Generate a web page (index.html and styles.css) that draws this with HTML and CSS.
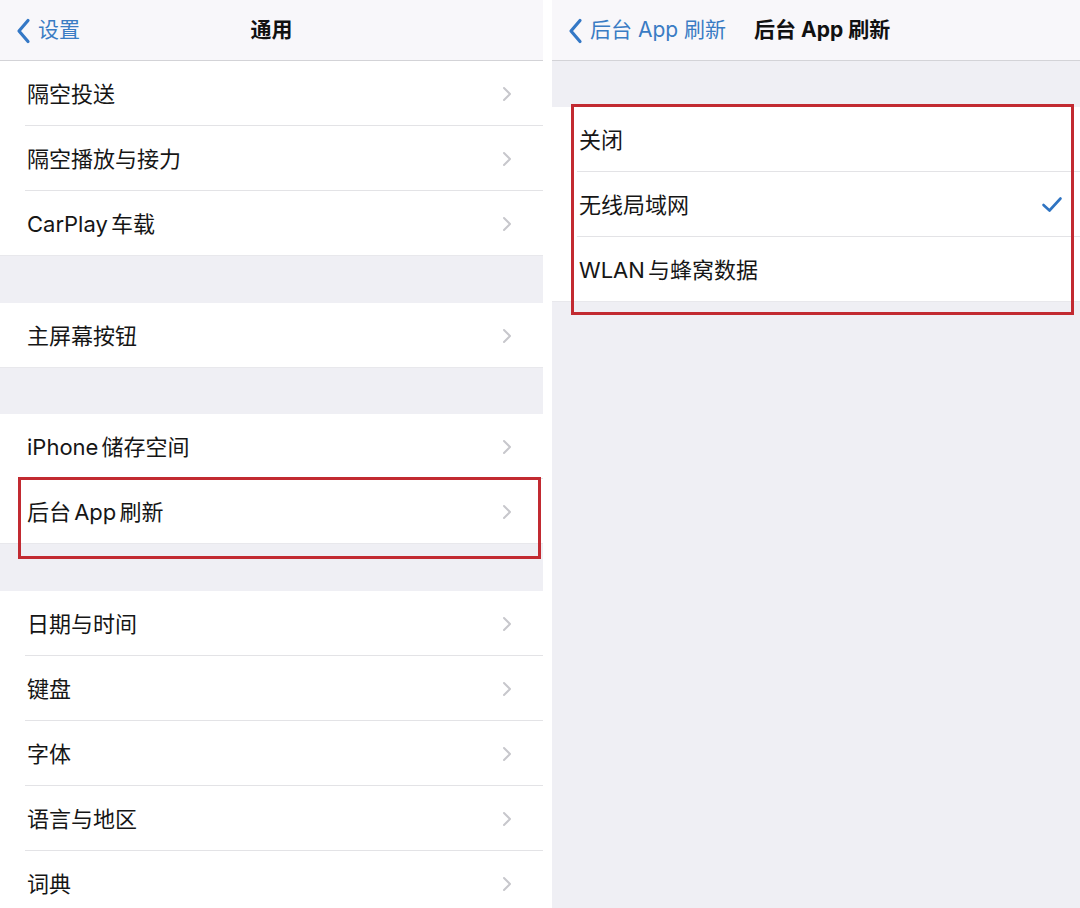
FILE: index.html
```html
<!DOCTYPE html>
<html lang="zh-CN">
<head>
<meta charset="utf-8">
<title>通用 / 后台 App 刷新</title>
<link rel="stylesheet" href="styles.css">
</head>
<body>
<div class="screen">
  <section class="panel panel-left">
    <header class="nav nav-left">
      <div class="back">
        <svg class="back-icon" width="15" height="26" viewBox="0 0 15 26"><polyline points="12,2.5 3,13 12,23.5" fill="none" stroke="#3478c6" stroke-width="3.2" stroke-linecap="round" stroke-linejoin="round"/></svg>
        <span class="back-text">设置</span>
      </div>
      <div class="nav-title">通用</div>
      <div></div>
    </header>
    <div class="list">
      <div class="group">
        <div class="row"><span class="label">隔空投送</span><svg class="chev" width="10" height="16" viewBox="0 0 10 16"><polyline points="2,2 8,8 2,14" fill="none" stroke="#c7c7cc" stroke-width="2" stroke-linecap="round" stroke-linejoin="round"/></svg></div>
        <div class="row"><span class="label">隔空播放与接力</span><svg class="chev" width="10" height="16" viewBox="0 0 10 16"><polyline points="2,2 8,8 2,14" fill="none" stroke="#c7c7cc" stroke-width="2" stroke-linecap="round" stroke-linejoin="round"/></svg></div>
        <div class="row"><span class="label">CarPlay 车载</span><svg class="chev" width="10" height="16" viewBox="0 0 10 16"><polyline points="2,2 8,8 2,14" fill="none" stroke="#c7c7cc" stroke-width="2" stroke-linecap="round" stroke-linejoin="round"/></svg></div>
      </div>
      <div class="spacer spacer-a"></div>
      <div class="group">
        <div class="row"><span class="label">主屏幕按钮</span><svg class="chev" width="10" height="16" viewBox="0 0 10 16"><polyline points="2,2 8,8 2,14" fill="none" stroke="#c7c7cc" stroke-width="2" stroke-linecap="round" stroke-linejoin="round"/></svg></div>
      </div>
      <div class="spacer spacer-b"></div>
      <div class="group">
        <div class="row"><span class="label">iPhone 储存空间</span><svg class="chev" width="10" height="16" viewBox="0 0 10 16"><polyline points="2,2 8,8 2,14" fill="none" stroke="#c7c7cc" stroke-width="2" stroke-linecap="round" stroke-linejoin="round"/></svg></div>
        <div class="row"><span class="label">后台 App 刷新</span><svg class="chev" width="10" height="16" viewBox="0 0 10 16"><polyline points="2,2 8,8 2,14" fill="none" stroke="#c7c7cc" stroke-width="2" stroke-linecap="round" stroke-linejoin="round"/></svg></div>
      </div>
      <div class="spacer spacer-c"></div>
      <div class="group">
        <div class="row"><span class="label">日期与时间</span><svg class="chev" width="10" height="16" viewBox="0 0 10 16"><polyline points="2,2 8,8 2,14" fill="none" stroke="#c7c7cc" stroke-width="2" stroke-linecap="round" stroke-linejoin="round"/></svg></div>
        <div class="row"><span class="label">键盘</span><svg class="chev" width="10" height="16" viewBox="0 0 10 16"><polyline points="2,2 8,8 2,14" fill="none" stroke="#c7c7cc" stroke-width="2" stroke-linecap="round" stroke-linejoin="round"/></svg></div>
        <div class="row"><span class="label">字体</span><svg class="chev" width="10" height="16" viewBox="0 0 10 16"><polyline points="2,2 8,8 2,14" fill="none" stroke="#c7c7cc" stroke-width="2" stroke-linecap="round" stroke-linejoin="round"/></svg></div>
        <div class="row"><span class="label">语言与地区</span><svg class="chev" width="10" height="16" viewBox="0 0 10 16"><polyline points="2,2 8,8 2,14" fill="none" stroke="#c7c7cc" stroke-width="2" stroke-linecap="round" stroke-linejoin="round"/></svg></div>
        <div class="row"><span class="label">词典</span><svg class="chev" width="10" height="16" viewBox="0 0 10 16"><polyline points="2,2 8,8 2,14" fill="none" stroke="#c7c7cc" stroke-width="2" stroke-linecap="round" stroke-linejoin="round"/></svg></div>
      </div>
    </div>
    <div class="highlight highlight-left"></div>
  </section>

  <section class="panel panel-right">
    <header class="nav nav-right">
      <div class="back">
        <svg class="back-icon" width="15" height="26" viewBox="0 0 15 26"><polyline points="12,2.5 3,13 12,23.5" fill="none" stroke="#3478c6" stroke-width="3.2" stroke-linecap="round" stroke-linejoin="round"/></svg>
        <span class="back-text">后台 App 刷新</span>
      </div>
      <div class="nav-title nav-title-right">后台 App 刷新</div>
    </header>
    <div class="list list-right">
      <div class="spacer spacer-top"></div>
      <div class="group group-right">
        <div class="row row-right"><span class="label">关闭</span></div>
        <div class="row row-right"><span class="label">无线局域网</span><svg class="check" width="22" height="17" viewBox="0 0 22 17"><polyline points="2.5,9 8.5,14.5 19.5,2.5" fill="none" stroke="#2f74c2" stroke-width="2.6" stroke-linecap="round" stroke-linejoin="round"/></svg></div>
        <div class="row row-right"><span class="label">WLAN 与蜂窝数据</span></div>
      </div>
    </div>
    <div class="highlight highlight-right"></div>
  </section>
</div>
</body>
</html>
```

FILE: styles.css
```css
* { box-sizing: border-box; }

html, body {
  margin: 0;
  padding: 0;
  background: #ffffff;
}

body {
  width: 1080px;
  height: 908px;
  overflow: hidden;
  font-family: Inter, "Noto Sans CJK SC", sans-serif;
  color: #161616;
}

.screen {
  display: flex;
  gap: 9px;
  height: 908px;
}

.panel {
  position: relative;
  display: flex;
  flex-direction: column;
  height: 908px;
  overflow: hidden;
}

.panel-left {
  width: 543px;
  background: #ffffff;
}

.panel-right {
  width: 528px;
  background: #efeff4;
}

/* Navigation bars */
.nav {
  height: 61px;
  flex: none;
  background: #f8f7fa;
  border-bottom: 1px solid #d3d3d7;
  align-items: center;
}

.nav-left {
  display: grid;
  grid-template-columns: 1fr auto 1fr;
  padding: 0 16px;
}

.nav-right {
  display: flex;
  padding-left: 16px;
}

.back {
  display: flex;
  align-items: center;
  gap: 7px;
  color: #3a7cc4;
  font-size: 21px;
  line-height: 28px;
}

.back-icon {
  display: block;
  margin-top: 1px;
}

.nav-title {
  font-size: 21px;
  font-weight: 700;
  line-height: 28px;
  color: #111111;
}

.nav-title-right {
  margin-left: 28px;
}

/* Lists */
.list {
  display: flex;
  flex-direction: column;
}

.group {
  background: #ffffff;
}

.row {
  position: relative;
  height: 65px;
  display: flex;
  align-items: center;
  padding-left: 27px;
  padding-right: 31px;
  font-size: 22px;
  line-height: 30px;
}

.row::after {
  content: "";
  position: absolute;
  left: 25px;
  right: 0;
  bottom: 0;
  height: 1px;
  background: #e3e3e6;
}

.row:last-child::after {
  left: 0;
  background: #e8e8ec;
}

.label {
  color: #161616;
  word-spacing: -3px;
}

.chev {
  display: block;
  margin-left: auto;
}

.spacer {
  background: #efeff4;
}

.spacer-a { height: 47px; }
.spacer-b { height: 46px; }
.spacer-c { height: 47px; }
.spacer-top { height: 46px; }

/* Right panel list */
.row-right {
  padding-right: 17px;
}

.check {
  display: block;
  margin-left: auto;
}

/* Red annotation boxes */
.highlight {
  position: absolute;
  border: 3px solid #c22a31;
  pointer-events: none;
}

.highlight-left {
  left: 18px;
  top: 477px;
  width: 523px;
  height: 82px;
}

.highlight-right {
  left: 19px;
  top: 104px;
  width: 503px;
  height: 211px;
}
```
